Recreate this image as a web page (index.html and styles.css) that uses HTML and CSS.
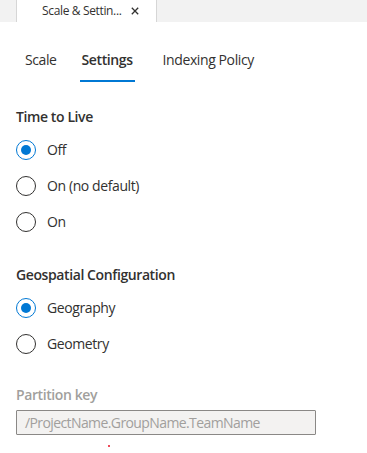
FILE: index.html
```html
<!DOCTYPE html>
<html lang="en">
<head>
<meta charset="utf-8">
<title>Scale &amp; Settings</title>
<link rel="stylesheet" href="styles.css">
</head>
<body>
<div class="tabbar">
  <div class="doc-tab">
    <span class="doc-tab-title">Scale &amp; Settin...</span>
    <svg class="doc-tab-close" width="8" height="8" viewBox="0 0 8 8" aria-hidden="true">
      <path d="M0.8 0.8 L7.2 7.2 M7.2 0.8 L0.8 7.2" stroke="#323130" stroke-width="1.3" fill="none"/>
    </svg>
  </div>
</div>

<nav class="pivot">
  <span class="pivot-item">Scale</span>
  <span class="pivot-item active">Settings</span>
  <span class="pivot-item">Indexing Policy</span>
</nav>

<main class="content">
  <section class="group">
    <div class="group-label">Time to Live</div>
    <div class="choices">
      <div class="choice checked"><span class="radio"></span><span class="choice-text">Off</span></div>
      <div class="choice"><span class="radio"></span><span class="choice-text">On (no default)</span></div>
      <div class="choice"><span class="radio"></span><span class="choice-text">On</span></div>
    </div>
  </section>

  <section class="group">
    <div class="group-label">Geospatial Configuration</div>
    <div class="choices">
      <div class="choice checked"><span class="radio"></span><span class="choice-text">Geography</span></div>
      <div class="choice"><span class="radio"></span><span class="choice-text">Geometry</span></div>
    </div>
  </section>

  <section class="group group-partition">
    <div class="group-label disabled">Partition key</div>
    <div class="field">/ProjectName.GroupName.TeamName</div>
    <div class="dot-row"><span class="red-dot"></span></div>
  </section>
</main>
</body>
</html>
```

FILE: styles.css
```css
* { box-sizing: border-box; }

html, body {
  margin: 0;
  padding: 0;
  background: #ffffff;
}

body {
  font-family: "Open Sans", "Noto Sans", "Liberation Sans", sans-serif;
  color: #323130;
  font-size: 14px;
}

.tabbar {
  height: 22px;
  background: #f2f2f2;
  display: flex;
  padding-left: 16px;
}

.doc-tab {
  width: 141px;
  height: 22px;
  background: #ffffff;
  border-left: 1px solid #d6d6d6;
  border-right: 1px solid #d6d6d6;
  display: flex;
  align-items: center;
  padding-left: 25px;
  padding-bottom: 2px;
}

.doc-tab-title {
  font-size: 12px;
  letter-spacing: -0.35px;
  color: #323130;
  white-space: nowrap;
}

.doc-tab-close {
  margin-left: 9px;
  margin-top: 1px;
}

.pivot {
  margin-top: 16px;
  height: 44px;
  display: flex;
  padding-left: 17px;
}

.pivot-item {
  position: relative;
  height: 44px;
  line-height: 44px;
  padding: 0 8px;
  margin-right: 9px;
  font-size: 14px;
  letter-spacing: -0.4px;
  color: #323130;
  white-space: nowrap;
}

.pivot-item.active {
  font-weight: 600;
  margin-right: 14px;
}

.pivot-item.active::after {
  content: "";
  position: absolute;
  left: 6px;
  right: 6px;
  bottom: 0;
  height: 2px;
  background: #0078d4;
}

.content {
  padding-left: 16px;
}

.group {
  margin-top: 25px;
}

.group-partition {
  margin-top: 23px;
}

.group-label {
  height: 20px;
  line-height: 20px;
  font-weight: 600;
  font-size: 14px;
  letter-spacing: -0.4px;
  color: #323130;
}

.group-label.disabled {
  color: #a19f9d;
}

.choices {
  margin-top: 5px;
  display: flex;
  flex-direction: column;
}

.choice {
  height: 36px;
  display: flex;
  align-items: center;
}

.radio {
  width: 20px;
  height: 20px;
  border-radius: 50%;
  border: 1px solid #323130;
  display: flex;
  align-items: center;
  justify-content: center;
  flex: none;
}

.choice.checked .radio {
  border-color: #0078d4;
}

.choice.checked .radio::after {
  content: "";
  width: 10px;
  height: 10px;
  border-radius: 50%;
  background: #0078d4;
}

.choice-text {
  margin-left: 11px;
  font-size: 14px;
  letter-spacing: -0.4px;
  line-height: 20px;
  color: #323130;
}

.field {
  margin-top: 5px;
  width: 300px;
  height: 25px;
  border: 1px solid #8a8886;
  border-radius: 1px;
  background: #f3f2f1;
  color: #a19f9d;
  font-size: 14px;
  letter-spacing: -0.6px;
  line-height: 23px;
  padding-left: 8px;
  white-space: nowrap;
}

.dot-row {
  height: 12px;
  padding-left: 92px;
  padding-top: 10px;
}

.red-dot {
  display: block;
  width: 2px;
  height: 2px;
  background: #e81123;
  border-radius: 1px;
}
```
